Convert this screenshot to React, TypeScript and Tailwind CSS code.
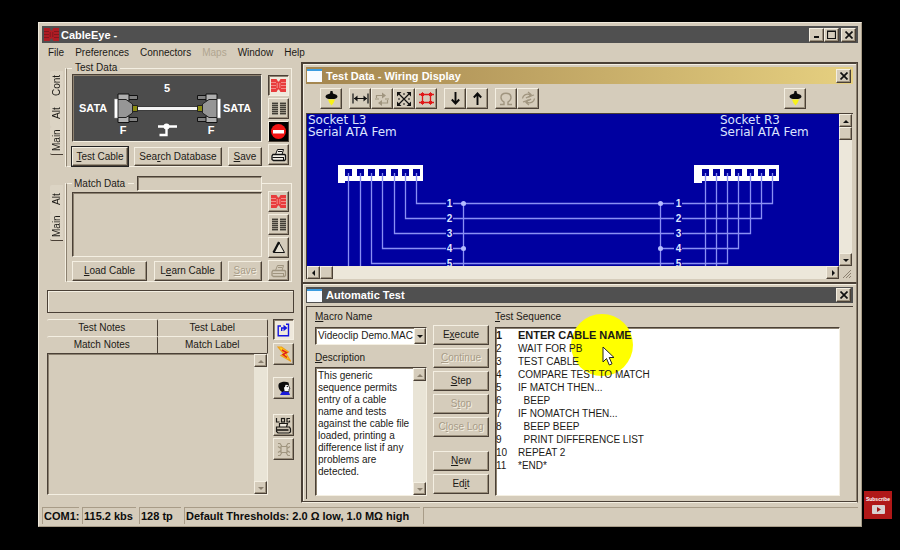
import { useState } from "react";
import type { ReactNode } from "react";
import clsx from "clsx";

const raised =
  "border border-t-[#f4efe2] border-l-[#f4efe2] border-b-[#4a4036] border-r-[#4a4036] shadow-[inset_-1px_-1px_0_#9a8f7c]";
const sunken =
  "border border-t-[#4a4036] border-l-[#4a4036] border-b-[#f4efe2] border-r-[#f4efe2] shadow-[inset_1px_1px_0_#8c8170]";

const sequence = [
  "ENTER CABLE NAME",
  "WAIT FOR PB",
  "TEST CABLE",
  "COMPARE TEST TO MATCH",
  "IF MATCH THEN...",
  "  BEEP",
  "IF NOMATCH THEN...",
  "  BEEP BEEP",
  "  PRINT DIFFERENCE LIST",
  "REPEAT 2",
  "*END*",
];

// Renders a label with one underlined accelerator letter
const Accel = ({ text, at }: { text: string; at: number }) => (
  <span className="whitespace-pre">
    {text.slice(0, at)}
    <span className="underline underline-offset-1">{text[at]}</span>
    {text.slice(at + 1)}
  </span>
);

type ButtonProps = {
  text: string;
  at: number;
  className?: string;
  disabled?: boolean;
};

const PushButton = ({ text, at, className, disabled }: ButtonProps) => (
  <button
    disabled={disabled}
    className={clsx(
      "flex items-center justify-center bg-[#d5ccbb] whitespace-nowrap",
      raised,
      disabled && "text-[#a89c88] [text-shadow:1px_1px_0_#f4efe2]",
      className
    )}
  >
    <Accel text={text} at={at} />
  </button>
);

const IconButton = ({
  label,
  children,
  pressed,
  className = "h-[21px] w-[21px]",
}: {
  label: string;
  children: ReactNode;
  pressed?: boolean;
  className?: string;
}) => (
  <button
    aria-label={label}
    className={clsx(
      "flex shrink-0 items-center justify-center",
      pressed ? "bg-[#efe9dc]" : "bg-[#d5ccbb]",
      pressed ? sunken : raised,
      className
    )}
  >
    {children}
  </button>
);

const LogoIcon = ({ color, line }: { color: string; line: string }) => (
  <svg width="15" height="13" viewBox="0 0 15 13">
    <path d="M0 0h5.500L7 2.500h1L9.500 0H15v13H9.500L8 10.500H7L5.500 13H0z" fill={color} />
    <path d="M0 3.500h5M10 3.500h5M0 6.500h5M10 6.500h5M0 9.500h5M10 9.500h5" stroke={line} strokeWidth="0.500" />
    <path d="M6.200 4v5M8.800 4v5" stroke={line} strokeWidth="0.500" />
  </svg>
);

const ListIcon = () => (
  <svg width="14" height="13" viewBox="0 0 14 13" shapeRendering="crispEdges">
    <path
      d="M0 1h6M8 1h6M0 3h6M8 3h6M0 5h6M8 5h6M0 7h6M8 7h6M0 9h6M8 9h6M0 11h6M8 11h6"
      stroke="#3c3830"
      strokeWidth="1"
      transform="translate(0 .5)"
    />
    <path d="M0 0h6v13H0zM8 0h6v13H8z" fill="#4a463e" opacity="0.45" />
  </svg>
);

const StopIcon = () => (
  <svg width="19" height="19" viewBox="0 0 19 19">
    <path d="M0 0h19v19H0z" fill="#000" />
    <circle cx="9.5" cy="9.5" r="7.5" fill="#f01414" />
    <path d="M4 8h11v3.500H4z" fill="#fff" />
  </svg>
);

const PrinterIcon = ({ color = "#111", fill = "#f4f0e8" }: { color?: string; fill?: string }) => (
  <svg width="16" height="14" viewBox="0 0 16 14" fill="none" stroke={color}>
    <path d="M4.500 6.500L6.500 1.500h6l-1.500 5" fill={fill} />
    <path d="M2 6.500h11.500l1 1v4l-1 1H2.500l-1.500-1V8z" fill={fill} strokeWidth="1.300" />
    <path d="M1.500 9.500h11M12.500 9v3.500M7 3.500h4M14.500 6.500v2" />
  </svg>
);

const DeltaIcon = () => (
  <svg width="14" height="13" viewBox="0 0 14 13">
    <path d="M7 1.500L12.500 11.500H1.500z" fill="#e8e2d4" stroke="#111" />
    <path d="M7 1L1.500 11.500" stroke="#111" strokeWidth="2.200" />
  </svg>
);

const ImportIcon = () => (
  <svg width="13" height="14" viewBox="0 0 13 14" fill="none" stroke="#1414e0" strokeWidth="1.400">
    <path d="M4 3H1.200v9.800h10.300V1.200H9" />
    <path d="M4.700 8V5h3" />
    <path d="M6.500 1.800l4 3.200-4 3.200z" fill="#1414e0" stroke="none" />
  </svg>
);

const BoltIcon = () => (
  <svg width="14" height="16" viewBox="0 0 14 16">
    <path d="M1 1h3.500l7 5-2.500 1.500 4.500 7.500L4 9.500 7 8z" fill="#ffd21c" stroke="#f0a018" strokeWidth="1.200" />
    <path d="M5 4l4.500 2.500-3.500 2 4 3" fill="none" stroke="#e0201c" strokeWidth="1.500" />
  </svg>
);

const HeadIcon = () => (
  <svg width="14" height="14" viewBox="0 0 14 14">
    <path d="M6 9h5l2 5H3z" fill="#1c1cd8" />
    <path d="M6 3h5l1 2.500 1 2-1 .5v2.500H8L6 9z" fill="#fff" stroke="#111" strokeWidth="0.700" />
    <path d="M2 2.500C4 .5 9 0 11.500 1.500L12 4 8.500 3.800 8 6l-1 .5.500 3-2 1.500C2 10 .5 5 2 2.500z" fill="#0c0c0c" />
    <circle cx="10.300" cy="5.500" r="0.700" fill="#111" />
  </svg>
);

const LogIcon = () => (
  <svg width="17" height="17" viewBox="0 0 17 17" fill="none" stroke="#1c1a16" strokeWidth="1.200">
    <path d="M1.500 1v4h3" />
    <rect x="6.500" y="1.500" width="3" height="3.500" />
    <path d="M15 1.500h-3V5h2.500V3.500" />
    <path d="M4.500 10V6.500h8l-1 3.500" fill="#eee8dc" />
    <path d="M1.500 10h13l1 2v3l-1.500 1H3l-1.500-1.500z" fill="#c8bfae" />
    <path d="M2 13h11.500" strokeWidth="1.600" />
  </svg>
);

const CrossedIcon = () => (
  <svg width="14" height="15" viewBox="0 0 14 15" fill="none" stroke="#a0957f" strokeWidth="1.200">
    <path d="M1 1.500h2l2 3h4l2-3h2M1 13.500h2l2-3h4l2 3h2" />
    <path d="M4 5.500v4M10 5.500v4M1 4.500l3 2M13 4.500l-3 2M1 10.500l3-2M13 10.500l-3-2M4 4.500h6v6H4z" />
  </svg>
);

const LampIcon = () => (
  <svg width="15" height="15" viewBox="0 0 15 15">
    <path d="M6.500 0h2l.5 2.500c3 .8 4.500 1.800 4.500 3.100C13.500 7.200 11.500 8 10 8H5C3.500 8 1.500 7.200 1.500 5.600 1.500 4.300 3 3.300 6 2.500z" fill="#0a0a0a" />
    <path d="M4 8.500h7L9.500 12 7.500 14.500 5.500 12z" fill="#f8f218" />
  </svg>
);

const SpanIcon = () => (
  <svg width="17" height="13" viewBox="0 0 17 13">
    <path d="M1 1.500v10M16 1.500v10M2 6.500h13" stroke="#111" strokeWidth="1.200" />
    <path d="M2 6.500L5.500 3.500v6zM15 6.500L11.500 3.500v6z" fill="#111" />
  </svg>
);

const SwapIcon = () => (
  <svg width="16" height="14" viewBox="0 0 16 14">
    <path d="M2.500 6V3.500H9M13.500 8v3H7M1 7h4M11 7h4" fill="none" stroke="#a0957f" strokeWidth="1.200" />
    <path d="M8 .5L12 3.500 8 6.500zM8 8l-4 3 4 3z" fill="#a0957f" />
  </svg>
);

const ExpandIcon = () => (
  <svg width="14" height="14" viewBox="0 0 14 14">
    <path d="M2 2l10 10M12 2L2 12" stroke="#111" strokeWidth="1.200" />
    <path d="M0 0h4.500L0 4.500zM14 0v4.500L9.500 0zM0 14V9.500L4.500 14zM14 14H9.500L14 9.500z" fill="#111" />
    <path d="M7 1v2M7 11v2M1 7h2M11 7h2" stroke="#111" strokeWidth="1" />
  </svg>
);

const NodesIcon = () => (
  <svg width="17" height="13" viewBox="0 0 17 13">
    <path d="M1 2.500h15M1 10.500h15M4.500 2v9M12.500 2v9" stroke="#e01818" strokeWidth="1.300" />
    <path d="M4.500 .5L6.500 2.500l-2 2-2-2zM12.500 .5l2 2-2 2-2-2zM4.500 8.500l2 2-2 2-2-2zM12.500 8.500l2 2-2 2-2-2z" fill="#e01818" stroke="#e01818" />
  </svg>
);

const ArrowIcon = ({ up }: { up?: boolean }) => (
  <svg width="11" height="13" viewBox="0 0 11 13" className={up ? "rotate-180" : ""}>
    <path d="M5.500 0v11M1.800 7.500l3.700 4 3.700-4" fill="none" stroke="#0a0a0a" strokeWidth="1.900" />
  </svg>
);

const OhmIcon = () => (
  <svg width="14" height="14" viewBox="0 0 14 14">
    <path d="M1 12.500h4V10C2.500 8.500 2 7 2 5.500 2 3 4 1.200 7 1.200s5 1.800 5 4.300c0 1.500-.5 3-3 4.500v2.500h4" fill="none" stroke="#a0957f" strokeWidth="1.400" />
  </svg>
);

const RotateIcon = () => (
  <svg width="15" height="15" viewBox="0 0 15 15" fill="none" stroke="#a0957f" strokeWidth="1.300">
    <path d="M1.500 7.500C2 4 5 2.500 9 3.500M13.500 7.500c-.5 3.500-3.500 5-7.500 4" />
    <path d="M7 1l3 2.500L7.500 6.500M8 14l-3-2.500L7.500 8.500" />
    <path d="M5 7c1.500-1.500 5-2 8-3M10 8c-1.500 1.500-5 2-8 3" />
  </svg>
);

const Triangle = ({ dir, color = "#111" }: { dir: "up" | "down" | "left" | "right"; color?: string }) => {
  const paths = {
    up: "M0 5l3-3 3 3z",
    down: "M0 2l3 3 3-3z",
    left: "M4 0v6L1 3z",
    right: "M2 0v6l3-3z",
  };
  return (
    <svg width="6" height="6" viewBox="0 0 6 6">
      <path d={paths[dir]} fill={color} />
    </svg>
  );
};

const DimScrollbar = () => (
  <div className="flex w-[13px] shrink-0 flex-col justify-between bg-[#e9e4d6]">
    <IconButton label="Scroll up" className="h-[13px] w-[13px]">
      <Triangle dir="up" color="#8c8170" />
    </IconButton>
    <IconButton label="Scroll down" className="h-[13px] w-[13px]">
      <Triangle dir="down" color="#8c8170" />
    </IconButton>
  </div>
);

const CablePlug = () => (
  <>
    <path d="M14.500 5.500h9v4h-9zM14.500 27.500h9v4h-9z" fill="#808080" stroke="#111" />
    <path d="M4 4h11v7H4zM4 26h11v6.500H4z" fill="#b0b0b0" stroke="#111" />
    <path d="M4 9.500h8l6.500 4.500v9L12 27.500H4z" fill="#969696" stroke="#222" />
    <path d="M.500 9h3v19h-3z" fill="#fff" stroke="#999" strokeWidth="0.500" />
    <path d="M18.500 15.500h5v6h-5z" fill="#8c8c14" stroke="#222" />
  </>
);

const CablePicture = () => (
  <div className={clsx("flex h-[68px] items-center justify-center bg-[#4c4c4c]", sunken)}>
    <svg width="186" height="66" viewBox="0 0 186 66" fontFamily="'Liberation Sans', sans-serif" fontSize="11" fontWeight="bold" fill="#fff">
      <text x="93" y="17" textAnchor="middle">5</text>
      <text x="5" y="37">SATA</text>
      <text x="149" y="37">SATA</text>
      <text x="49" y="59" textAnchor="middle">F</text>
      <text x="137" y="59" textAnchor="middle">F</text>
      <path d="M62 31.500h64v4H62z" fill="#f4f4f4" stroke="#222" strokeWidth="0.800" />
      <g transform="translate(40 15)"><CablePlug /></g>
      <g transform="translate(147 15) scale(-1 1)"><CablePlug /></g>
      <path d="M84 51.500h19M92.500 52v8h-7" fill="none" stroke="#fff" strokeWidth="2.400" />
      <circle cx="92.500" cy="51.500" r="3" />
    </svg>
  </div>
);

const SideTabs = ({ tabs }: { tabs: string[] }) => (
  <div className="flex w-[18px] shrink-0 flex-col pt-[9px] pr-[4px] pl-[2px]">
    {tabs.map((tab, i) => (
      <button
        key={tab}
        className={clsx(
          "flex h-[28px] w-[13px] rotate-180 items-center justify-center rounded-r-xs bg-[#dcd4c4] leading-[12px] [writing-mode:vertical-rl]",
          i === tabs.length - 1 && "border-t border-t-[#4a4036]"
        )}
      >
        {tab}
      </button>
    ))}
  </div>
);

const groupBox = "min-w-0 grow border border-[#f4efe2] border-l-[#8c8170] pl-[5px] shadow-[-1px_0_0_#f4efe2]";

const TestGroup = () => (
  <section className="flex pr-[9px] pl-[6px]">
    <SideTabs tabs={["Cont", "Alt", "Main"]} />
    <fieldset className={groupBox}>
      <legend className="px-[3px] leading-[12px]">Test Data</legend>
      <div className="flex gap-[6px]">
        <div className="flex w-[190px] flex-col gap-[5px]">
          <CablePicture />
          <div className="flex justify-between">
            <PushButton text="Test Cable" at={0} className="h-[19px] w-[56px] outline outline-[#222]" />
            <PushButton text="Search Database" at={3} className="h-[19px] w-[88px]" />
            <PushButton text="Save" at={0} className="h-[19px] w-[34px]" />
          </div>
        </div>
        <div className="flex flex-col gap-[2px] py-[1px]">
          <IconButton label="Show wiring" pressed><LogoIcon color="#e83c3c" line="#ffd8d0" /></IconButton>
          <IconButton label="Show list"><ListIcon /></IconButton>
          <IconButton label="Fail"><StopIcon /></IconButton>
          <IconButton label="Print"><PrinterIcon /></IconButton>
        </div>
      </div>
    </fieldset>
  </section>
);

const MatchGroup = () => (
  <section className="mt-[9px] flex pr-[9px] pl-[6px]">
    <SideTabs tabs={["Alt", "Main"]} />
    <fieldset className={groupBox}>
      <legend className="flex w-[190px] items-center pl-[2px] leading-[12px]">
        <label htmlFor="match-name" className="whitespace-nowrap">Match Data</label>
        <span className="mx-[3px] h-px grow bg-[#f4efe2]" />
        <input id="match-name" className={clsx("h-[15px] w-[125px] bg-[#d5ccbb] px-1", sunken)} />
      </legend>
      <div className="flex gap-[6px]">
        <div className="flex w-[190px] flex-col gap-[4px] pt-[1px]">
          <div className={clsx("h-[65px]", sunken)} />
          <div className="flex justify-between">
            <PushButton text="Load Cable" at={0} className="h-[20px] w-[75px]" />
            <PushButton text="Learn Cable" at={1} className="h-[20px] w-[68px]" />
            <PushButton text="Save" at={0} className="h-[20px] w-[34px]" disabled />
          </div>
        </div>
        <div className="flex flex-col gap-[2px]">
          <IconButton label="Show match wiring"><LogoIcon color="#e83c3c" line="#ffd8d0" /></IconButton>
          <IconButton label="Show match list"><ListIcon /></IconButton>
          <IconButton label="Show differences"><DeltaIcon /></IconButton>
          <IconButton label="Print match"><PrinterIcon color="#a0957f" fill="none" /></IconButton>
        </div>
      </div>
    </fieldset>
  </section>
);

const NotesArea = () => (
  <section className="mt-[6px] flex min-h-0 grow justify-between pr-[7px] pb-[8px] pl-[5px]">
    <div className="flex w-[221px] flex-col">
      <div className="grid grid-cols-2">
        {["Test Notes", "Test Label", "Match Notes", "Match Label"].map((tab) => (
          <button
            key={tab}
            className="h-[17px] rounded-t-xs border-t border-r border-t-[#f4efe2] border-r-[#4a4036] text-center leading-[16px]"
          >
            {tab}
          </button>
        ))}
      </div>
      <div className={clsx("flex min-h-[120px] grow", sunken)}>
        <textarea aria-label="Match Notes" className="grow resize-none overflow-hidden p-1 outline-none" />
        <DimScrollbar />
      </div>
    </div>
    <div className="flex flex-col">
      <IconButton label="Auto import" pressed><ImportIcon /></IconButton>
      <IconButton label="Quick test" className="mt-[3px] h-[22px] w-[21px]"><BoltIcon /></IconButton>
      <IconButton label="Operator" className="mt-[12px] h-[22px] w-[21px]"><HeadIcon /></IconButton>
      <IconButton label="Print log" className="mt-[15px] h-[22px] w-[21px]"><LogIcon /></IconButton>
      <IconButton label="Cross reference" className="mt-[2px] h-[22px] w-[21px]"><CrossedIcon /></IconButton>
    </div>
  </section>
);

const WindowBox = () => (
  <svg width="15" height="13" viewBox="0 0 15 13">
    <path d="M0 0h15v13H0z" fill="#f8fbff" />
    <path d="M0 0h15v2H0z" fill="#3c9ce0" />
  </svg>
);

const CloseGlyph = () => (
  <svg width="8" height="8" viewBox="0 0 8 8">
    <path d="M0.500 0.500l7 7M7.500 0.500l-7 7" stroke="#111" strokeWidth="1.700" />
  </svg>
);

const leftPins = [41, 53, 64, 75, 87, 98, 109];
const rightPins = [398, 409, 420, 431, 443, 454, 465];

const WiringDiagram = () => (
  <svg width="532" height="152" viewBox="0 0 532 152" className="shrink-0" fontFamily="'DejaVu Sans', sans-serif" fontSize="12" fill="#dce4ff">
    <text x="1" y="10">Socket L3</text>
    <text x="1" y="22">Serial ATA Fem</text>
    <text x="413" y="10">Socket R3</text>
    <text x="413" y="22">Serial ATA Fem</text>
    <path d="M31 51h85v16H38v2h-7zM387 51h85v16h-77v2h-8z" fill="#fff" />
    {[...leftPins, ...rightPins].map((x) => (
      <rect key={x} x={x - 3} y="55" width="7" height="7" fill="#0000a0" />
    ))}
    <g fill="none" stroke="#8a90f4" strokeWidth="1.300">
      {leftPins.map((x, i) => {
        const wire = 7 - i;
        const y = 89.5 + (wire - 1) * 15;
        return <path key={x} d={`M${x + 0.5} 59V${y}H139M146 ${y}H${wire === 4 ? 156 : 250}`} />;
      })}
      {rightPins.map((x, i) => {
        const wire = 7 - i;
        const y = 89.5 + (wire - 1) * 15;
        return <path key={x} d={`M${x + 0.5} 59V${y}H375M367 ${y}H${wire === 4 ? 353 : 250}`} />;
      })}
      <path d="M156.500 89V152M353.500 89V152" />
    </g>
    {[156.5, 353.5].map((x) => (
      <g key={x} fill="#b4bcff">
        <circle cx={x} cy="89.500" r="2.500" />
        <circle cx={x} cy="134.500" r="2.500" />
      </g>
    ))}
    <g fontFamily="'Liberation Sans', sans-serif" fontSize="10" fontWeight="bold" textAnchor="middle">
      {[1, 2, 3, 4, 5].map((n) => (
        <g key={n}>
          <text x="142.500" y={78 + n * 15}>{n}</text>
          <text x="371.500" y={78 + n * 15}>{n}</text>
        </g>
      ))}
    </g>
  </svg>
);

const WiringWindow = () => {
  const tool = "h-[21px] w-[22px]";
  return (
    <section className="border border-[#4a4036] border-r-[#8c8170] p-[3px] shadow-[inset_1px_1px_0_#f4efe2]">
      <header className="flex h-[17px] items-center gap-[4px] bg-linear-to-r from-[#a48650] to-[#e6d080] pr-[2px] pl-[1px] text-[11px] font-bold text-white">
        <WindowBox />
        <h2 className="grow">Test Data - Wiring Display</h2>
        <IconButton label="Close wiring display" className="h-[14px] w-[15px]"><CloseGlyph /></IconButton>
      </header>
      <div className="flex h-[29px] items-center pr-[47px] pl-[14px]">
        <IconButton label="Left lamp" className={tool}><LampIcon /></IconButton>
        <div className="ml-[7px] flex">
          <IconButton label="Fit width" className={tool}><SpanIcon /></IconButton>
          <IconButton label="Swap" className={tool}><SwapIcon /></IconButton>
          <IconButton label="Expand" className={tool}><ExpandIcon /></IconButton>
          <IconButton label="Nodes" className={tool}><NodesIcon /></IconButton>
        </div>
        <div className="ml-[7px] flex">
          <IconButton label="Move down" className={tool}><ArrowIcon /></IconButton>
          <IconButton label="Move up" className={tool}><ArrowIcon up /></IconButton>
        </div>
        <div className="ml-[7px] flex grow">
          <IconButton label="Resistance" className={tool}><OhmIcon /></IconButton>
          <IconButton label="Rotate" className={tool}><RotateIcon /></IconButton>
        </div>
        <IconButton label="Right lamp" className={tool}><LampIcon /></IconButton>
      </div>
      <div className="flex border-t border-l border-[#4a4036] pr-[1px]">
        <div className="flex min-w-0 grow overflow-hidden bg-[#0000a0]">
          <WiringDiagram />
        </div>
        <div className="flex w-[13px] shrink-0 flex-col bg-[#ece7da]">
          <IconButton label="Scroll up" className="h-[13px] w-[13px]"><Triangle dir="up" /></IconButton>
          <div className={clsx("h-[13px] bg-[#d5ccbb]", raised)} />
          <div className="grow" />
          <IconButton label="Scroll down" className="h-[13px] w-[13px]"><Triangle dir="down" /></IconButton>
        </div>
      </div>
      <div className="flex h-[13px] border-l border-[#4a4036] bg-[#ece7da]">
        <IconButton label="Scroll left" className="h-[13px] w-[13px]"><Triangle dir="left" /></IconButton>
        <div className={clsx("w-[13px] bg-[#d5ccbb]", raised)} />
        <div className="grow" />
        <IconButton label="Scroll right" className="h-[13px] w-[13px]"><Triangle dir="right" /></IconButton>
        <svg width="14" height="13" viewBox="0 0 14 13">
          <path d="M0 0h14v13H0z" fill="#d5ccbb" />
          <path d="M4 12L12 4M7 12l5-5M10 12l2-2" stroke="#8c8170" />
        </svg>
      </div>
    </section>
  );
};

const AutomaticTest = () => {
  const [macro, setMacro] = useState("Videoclip Demo.MAC");

  return (
    <section className="flex grow flex-col border border-[#4a4036] border-r-[#8c8170] px-[3px] pt-[3px] pb-[2px] shadow-[inset_1px_1px_0_#f4efe2]">
      <header className="flex h-[16px] items-center gap-[4px] bg-[#505050] pr-[2px] pl-[1px] text-[11px] font-bold text-white">
        <WindowBox />
        <h2 className="grow">Automatic Test</h2>
        <IconButton label="Close automatic test" className="h-[14px] w-[15px]"><CloseGlyph /></IconButton>
      </header>
      <div className="mt-[3px] flex grow gap-[6px] border-t border-l border-[#4a4036] pt-[4px] pr-[13px] pb-[3px] pl-[8px]">
        <div className="flex w-[112px] flex-col">
          <label htmlFor="macro" className="leading-[12px]"><Accel text="Macro Name" at={0} /></label>
          <div className={clsx("relative mt-[4px] h-[18px] bg-white", sunken)}>
            <select
              id="macro"
              value={macro}
              onChange={(e) => setMacro(e.target.value)}
              className="h-full w-full appearance-none pl-[2px] whitespace-nowrap outline-none"
            >
              <option>Videoclip Demo.MAC</option>
            </select>
            <span
              className={clsx(
                "pointer-events-none absolute top-0 right-0 flex h-[16px] w-[12px] items-center justify-center bg-[#d5ccbb]",
                raised
              )}
            >
              <Triangle dir="down" />
            </span>
          </div>
          <label htmlFor="description" className="mt-[7px] leading-[12px]"><Accel text="Description" at={0} /></label>
          <div className={clsx("mt-[3px] flex grow bg-white", sunken)}>
            <textarea
              id="description"
              className="min-w-0 grow resize-none overflow-hidden pt-[2px] pl-[2px] leading-[12px] outline-none"
              defaultValue={
                "This generic\nsequence permits\nentry of a cable\nname and tests\nagainst the cable file\nloaded, printing a\ndifference list if any\nproblems are\ndetected."
              }
            />
            <DimScrollbar />
          </div>
        </div>
        <div className="flex w-[56px] flex-col gap-[3px] pt-[14px]">
          <PushButton text="Execute" at={1} className="h-[20px]" />
          <PushButton text="Continue" at={0} className="h-[20px]" disabled />
          <PushButton text="Step" at={0} className="h-[20px]" />
          <PushButton text="Stop" at={1} className="h-[20px]" disabled />
          <PushButton text="Close Log" at={1} className="h-[20px]" disabled />
          <PushButton text="New" at={0} className="mt-[11px] h-[20px]" />
          <PushButton text="Edit" at={2} className="h-[20px]" />
        </div>
        <div className="flex grow flex-col">
          <h3 className="leading-[12px]"><Accel text="Test Sequence" at={0} /></h3>
          <div className={clsx("relative mt-[4px] grow bg-white pt-px", sunken)}>
            <div className="pointer-events-none absolute -top-[14px] left-[75px] h-[62px] w-[62px] rounded-full bg-[#ffff00]" />
            <ol className="relative">
              {sequence.map((line, i) => (
                <li key={i} className={clsx("flex leading-[13px] whitespace-pre", i === 0 && "text-[11px] font-bold")}>
                  <span className="w-[22px]">{i + 1}</span>
                  {line}
                </li>
              ))}
            </ol>
            <svg className="pointer-events-none absolute top-[18px] left-[106px]" width="13" height="21" viewBox="0 0 13 21">
              <path d="M1 1v15l3.500-3.500 2.800 6.500 2.700-1.200-2.800-6.300H12z" fill="#fff" stroke="#222" />
            </svg>
          </div>
        </div>
      </div>
    </section>
  );
};

const statusCell = "border-t border-l border-t-[#a89c88] border-l-[#a89c88] pr-[2px] pl-px whitespace-nowrap";

const App = () => {
  return (
    <div className="relative flex min-h-screen flex-col bg-black px-[38px] pt-[22px] pb-[23px] font-['Liberation_Sans',sans-serif] text-[10px] leading-[12px] text-[#1c1a16]">
      <main className="flex grow flex-col border border-[#efe9dc] border-r-[#a89c88] border-b-[#a89c88] bg-[#d5ccbb] px-[3px] pt-[3px]">
        <header className="flex h-[17px] items-center bg-[#505050] pr-[2px] pl-[2px] text-[11px] font-bold text-white">
          <LogoIcon color="#b01c24" line="#501418" />
          <h1 className="ml-[2px] grow">CableEye -</h1>
          <IconButton label="Minimize" className="h-[14px] w-[15px]">
            <svg width="8" height="8"><path d="M1 5h5v2H1z" fill="#111" /></svg>
          </IconButton>
          <IconButton label="Maximize" className="h-[14px] w-[15px]">
            <svg width="9" height="9"><path d="M.500 1.500h8v7h-8zM0 1h9" fill="none" stroke="#111" strokeWidth="1.200" /></svg>
          </IconButton>
          <IconButton label="Close" className="ml-[2px] h-[14px] w-[15px]"><CloseGlyph /></IconButton>
        </header>
        <nav className="flex h-[19px] items-center gap-[11px] pl-[6px]">
          {["File", "Preferences", "Connectors", "Maps", "Window", "Help"].map((item) => (
            <button key={item} disabled={item === "Maps"} className="disabled:text-[#b0a590]">
              {item}
            </button>
          ))}
        </nav>
        <div className="flex grow">
          <div className="flex w-[259px] shrink-0 flex-col">
            <TestGroup />
            <MatchGroup />
            <div className="mt-[8px] mr-[7px] ml-[5px] h-[23px] border border-[#4a4036] shadow-[inset_1px_1px_0_#f4efe2]" />
            <NotesArea />
          </div>
          <div className="flex min-w-0 grow flex-col border border-[#4a4036] border-b-[#f4efe2]">
            <WiringWindow />
            <AutomaticTest />
          </div>
        </div>
        <footer className="flex h-[23px] gap-[3px] pt-[4px] pb-[2px] text-[11px] leading-[16px] font-bold text-[#0c0c0c]">
          <span className={clsx(statusCell, "w-[37px]")}>COM1:</span>
          <span className={clsx(statusCell, "w-[54px]")}>115.2 kbs</span>
          <span className={clsx(statusCell, "w-[42px]")}>128 tp</span>
          <span className={clsx(statusCell, "w-[236px]")}>Default Thresholds: 2.0 Ω low, 1.0 MΩ high</span>
          <span className={clsx(statusCell, "grow")} />
        </footer>
      </main>
      <button className="absolute right-[8px] bottom-[31px] flex h-[28px] w-[28px] flex-col items-center justify-center gap-[3px] bg-[#b01818] text-[5px] leading-[6px] font-bold text-white">
        Subscribe
        <svg width="13" height="9" viewBox="0 0 13 9">
          <rect width="13" height="9" rx="1" fill="#d8d0d0" />
          <path d="M5 2l4 2.500L5 7z" fill="#a01414" />
        </svg>
      </button>
    </div>
  );
};

export default App;
